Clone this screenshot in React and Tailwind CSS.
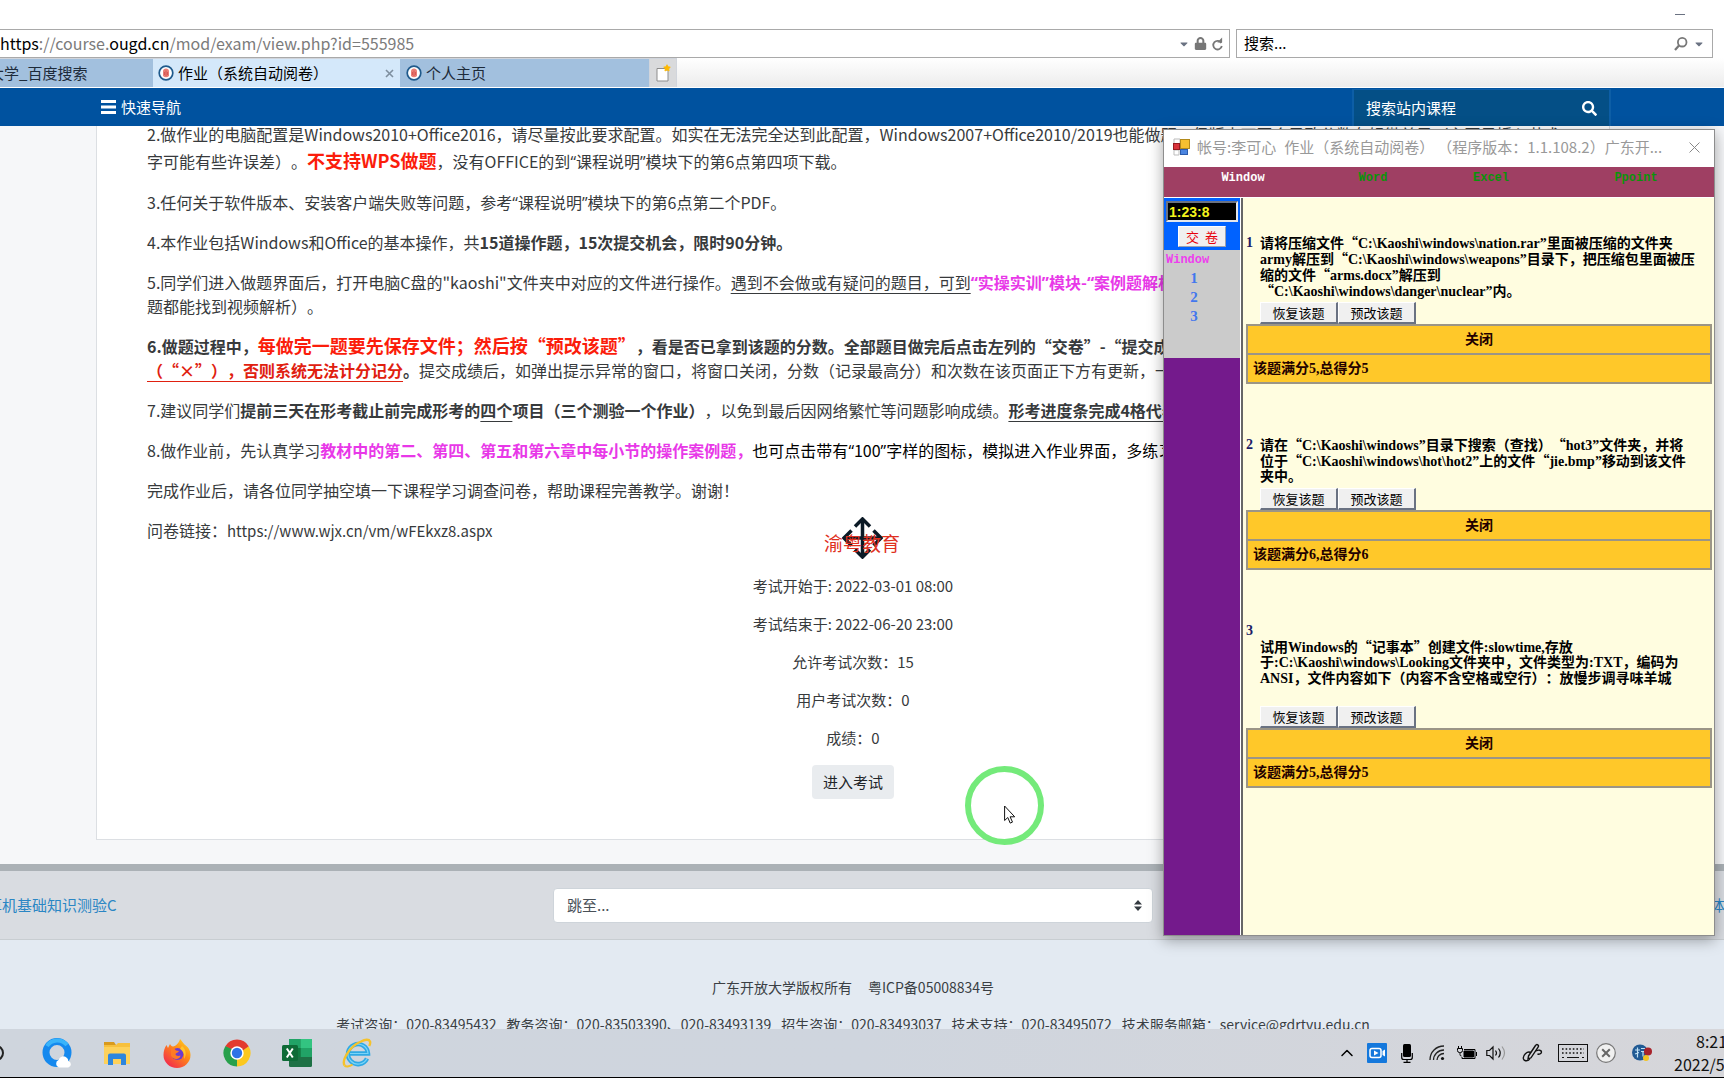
import React, { useState } from 'react';
import { ChevronUp, Star } from 'lucide-react';
import { FaLock, FaSearch, FaCaretDown } from 'react-icons/fa';

const questions = [
  {
    id: 1,
    lines: [
      '请将压缩文件“C:\\Kaoshi\\windows\\nation.rar”里面被压缩的文件夹',
      'army解压到“C:\\Kaoshi\\windows\\weapons”目录下，把压缩包里面被压',
      '缩的文件“arms.docx”解压到',
      '“C:\\Kaoshi\\windows\\danger\\nuclear”内。',
    ],
    result: '该题满分5,总得分5',
  },
  {
    id: 2,
    lines: [
      '请在“C:\\Kaoshi\\windows”目录下搜索（查找）“hot3”文件夹，并将',
      '位于“C:\\Kaoshi\\windows\\hot\\hot2”上的文件“jie.bmp”移动到该文件',
      '夹中。',
    ],
    result: '该题满分6,总得分6',
  },
  {
    id: 3,
    spaced: true,
    lines: [
      '试用Windows的“记事本”创建文件:slowtime,存放',
      '于:C:\\Kaoshi\\windows\\Looking文件夹中，文件类型为:TXT，编码为',
      'ANSI，文件内容如下（内容不含空格或空行）：放慢步调寻味羊城',
    ],
    result: '该题满分5,总得分5',
  },
];

const examInfo = [
  '考试开始于: 2022-03-01 08:00',
  '考试结束于: 2022-06-20 23:00',
  '允许考试次数：15',
  '用户考试次数：0',
  '成绩：0',
];

const contacts = [
  '考试咨询：020-83495432',
  '教务咨询：020-83503390、020-83493139',
  '招生咨询：020-83493037',
  '技术支持：020-83495072',
  '技术服务邮箱：service@gdrtvu.edu.cn',
];

// Curly quotes are full width in the CJK font, so they come from a Latin one here
const Quoted = ({ children }) => (
  <>
    <span className="font-['Open_Sans',sans-serif] leading-none">“</span>
    {children}
    <span className="font-['Open_Sans',sans-serif] leading-none">”</span>
  </>
);

// Opening quotes, and closing ones after a Chinese character, are full width
const WideQuotes = ({ text }) =>
  text.split(/(“|(?<=[\u4e00-\u9fff])”)/).map((part, idx) =>
    part === '“' || part === '”' ? (
      <span key={idx} className="font-['Noto_Sans_CJK_SC',sans-serif] leading-none">
        {part}
      </span>
    ) : (
      part
    )
  );

const SiteIcon = () => (
  <svg className="w-4 h-4 shrink-0" viewBox="0 0 16 16">
    <circle cx="8" cy="8" r="6.8" fill="#fff" stroke="#1f5a8c" strokeWidth="1.7" />
    <path d="M5 11V6.500C5 4.500 6.300 3.600 8 3.600s3 .9 3 2.900V11c-1.800 1.700-4.200 1.700-6 0z" fill="#ea7f76" />
    <path d="M6.500 10V7M8 11V5.500M9.500 10V7" stroke="#c93f3f" strokeWidth=".6" />
  </svg>
);

const BrowserChrome = () => (
  <header className="bg-white">
    <div className="h-[29px] flex justify-end items-center pr-[39px]">
      <button aria-label="最小化" className="w-[10px] h-4 flex items-center">
        <span className="w-full h-px bg-gray-500" />
      </button>
    </div>
    <div className="flex gap-[6px] pr-[11px] h-[29px]">
      <div className="flex-1 flex items-center gap-1 border border-l-0 border-[#a9a9a9] pr-[5px]">
        <div
          role="textbox"
          aria-label="地址"
          className="flex-1 pb-[2px] text-base leading-6 text-[#7b7b7b] whitespace-nowrap overflow-hidden"
        >
          <span className="text-black">https</span>://course.<span className="text-black">ougd.cn</span>
          /mod/exam/view.php?id=555985
        </div>
        <FaCaretDown className="w-3 h-3 text-gray-500" />
        <FaLock className="w-[13px] h-[13px] text-[#777]" />
        <button aria-label="刷新">
          <svg className="w-[13px] h-[14px]" viewBox="0 0 12 14">
            <path d="M9.800 6A4.300 4.300 0 1 0 10.300 9" fill="none" stroke="#777" strokeWidth="1.800" />
            <path d="M6 5.200 10.600.6v4.800H6z" fill="#777" />
          </svg>
        </button>
      </div>
      <div className="w-[477px] flex items-center gap-1 border border-[#a9a9a9] px-[7px]">
        <input
          aria-label="搜索"
          placeholder="搜索..."
          className="flex-1 min-w-0 pb-[2px] text-[15px] leading-6 outline-none placeholder:text-black"
        />
        <button aria-label="开始搜索" className="flex items-center gap-1">
          <svg className="w-4 h-4" viewBox="0 0 16 16" fill="none" stroke="#777">
            <circle cx="9.200" cy="6.200" r="4.300" strokeWidth="1.800" />
            <path d="M6 9.600 2 14" strokeWidth="2.200" />
          </svg>
          <FaCaretDown className="w-3 h-3 text-gray-500" />
        </button>
      </div>
    </div>
    <nav className="h-[30px] flex text-[15px] leading-6 bg-gradient-to-b from-white to-[#ececec] border-b border-white">
      <div className="w-[153px] flex items-center bg-[#a2c0de] border-t border-gray-300 text-[#1d2b3a] whitespace-nowrap">
        <span className="-ml-[11px]">大学_百度搜索</span>
      </div>
      <div className="w-[247px] flex items-center gap-1 pl-[5px] pr-[6px] bg-[#d4e8fa] border-t border-gray-300 text-black whitespace-nowrap">
        <SiteIcon />
        <span className="flex-1">作业（系统自动阅卷）</span>
        <button aria-label="关闭标签页">
          <svg className="w-[9px] h-[9px]" viewBox="0 0 9 9" stroke="#7e8f9f" strokeWidth="1.600">
            <path d="m1 1 7 7M8 1 1 8" />
          </svg>
        </button>
      </div>
      <div className="w-[249px] flex items-center gap-1 pl-[6px] bg-[#a2c0de] border-t border-gray-300 text-[#1d2b3a]">
        <SiteIcon />
        个人主页
      </div>
      <button aria-label="新建标签页" className="w-7 flex items-center justify-center bg-[#d9dadc] border border-b-0 border-gray-300">
        <span className="relative">
          <svg className="w-[15px] h-[17px]" viewBox="0 0 15 17">
            <path d="M1 3.500h8l3 3v9.500H1z" fill="#fff" stroke="#8d8d8d" />
          </svg>
          <Star className="absolute -top-px right-0 w-2 h-2 text-amber-400 fill-amber-400" />
        </span>
      </button>
    </nav>
  </header>
);

const SiteNav = () => (
  <div className="relative z-10 h-[38px] shrink-0 flex items-stretch justify-between bg-[#00529f] pl-[101px] pr-[113px] text-[15px] leading-6 text-white">
    <button className="flex items-center gap-[5px]">
      <svg className="w-[15px] h-[14px]" viewBox="0 0 15 14" fill="#fff">
        <path d="M0 0h15v3H0zM0 5.500h15v3H0zM0 11h15v3H0z" />
      </svg>
      快速导航
    </button>
    <div className="w-[259px] flex items-center mt-px px-3 bg-[#044f86] border-x-2 border-t border-[#0d5ea6]">
      <input
        aria-label="搜索站内课程"
        placeholder="搜索站内课程"
        className="flex-1 min-w-0 bg-transparent outline-none placeholder:text-white"
      />
      <button aria-label="搜索课程">
        <FaSearch className="w-[15px] h-[15px]" />
      </button>
    </div>
  </div>
);

const Instructions = () => (
  <div className="flex flex-col gap-4 whitespace-nowrap">
    <p>
      2.做作业的电脑配置是Windows2010+Office2016，请尽量按此要求配置。如实在无法完全达到此配置，Windows2007+Office2010/2019也能做题，但版本不同会导致分数有轻微差异（主要是插入艺术
      <br />
      字可能有些许误差）。
      <strong className="text-lg leading-7 text-[#fb1d0b]">不支持WPS做题</strong>
      ，没有OFFICE的到<Quoted>课程说明</Quoted>模块下的第6点第四项下载。
    </p>
    <p>
      3.任何关于软件版本、安装客户端失败等问题，参考<Quoted>课程说明</Quoted>模块下的第6点第二个PDF。
    </p>
    <p>
      4.本作业包括Windows和Office的基本操作，共<strong>15道操作题，15次提交机会，限时90分钟。</strong>
    </p>
    <p>
      5.同学们进入做题界面后，打开电脑C盘的"kaoshi"文件夹中对应的文件进行操作。
      <u className="underline-offset-4">遇到不会做或有疑问的题目，可到</u>
      <strong className="text-[#e838e8]">
        <Quoted>实操实训</Quoted>模块-<Quoted>案例题解析</Quoted>
      </strong>
      <br />
      题都能找到视频解析）。
    </p>
    <p>
      <strong>
        6.做题过程中，
        <span className="text-lg leading-none text-[#fb1d0b]">每做完一题要先保存文件；然后按“预改该题”</span>
        ，看是否已拿到该题的分数。全部题目做完后点击左列的“交卷”-“提交成
      </strong>
      <br />
      <strong className="text-[#e0200f] underline underline-offset-4">（“×”），否则系统无法计分记分</strong>
      <strong>。</strong>
      提交成绩后，如弹出提示异常的窗口，将窗口关闭，分数（记录最高分）和次数在该页面正下方有更新，一
    </p>
    <p>
      7.建议同学们
      <strong>
        提前三天在形考截止前完成形考的<u className="underline-offset-4">四个</u>项目（三个测验一个作业）
      </strong>
      ，以免到最后因网络繁忙等问题影响成绩。
      <strong className="underline underline-offset-4">形考进度条完成4格代表</strong>
    </p>
    <p>
      8.做作业前，先认真学习
      <strong className="text-[#e838e8]">教材中的第二、第四、第五和第六章中每小节的操作案例题，</strong>
      <span className="text-black">
        也可点击带有<Quoted>100</Quoted>字样的图标，模拟进入作业界面，多练习
      </span>
    </p>
    <p>完成作业后，请各位同学抽空填一下课程学习调查问卷，帮助课程完善教学。谢谢！</p>
    <p>
      问卷链接：<span className="text-[15px] leading-none">https://www.wjx.cn/vm/wFEkxz8.aspx</span>
    </p>
  </div>
);

const ClassicButton = ({ children }) => (
  <button className="w-[78px] h-[22px] bg-[#f0f0f0] text-[13px] leading-4 text-black border-t border-l border-r-2 border-b-2 border-t-white border-l-white border-r-gray-500 border-b-gray-500">
    {children}
  </button>
);

const Question = ({ question }) => {
  const [open, setOpen] = useState(true);
  return (
    <section className="font-bold text-sm leading-4 font-['Liberation_Serif','Noto_Sans_CJK_SC',serif]">
      <div className="flex pb-[3px]">
        <span className="w-[14px] text-[#1c1c66]">{question.id}</span>
        <p className={question.spaced ? 'py-4 whitespace-nowrap' : 'whitespace-nowrap'}>
          {question.lines.map((line) => (
            <span key={line} className="block h-4">
              <WideQuotes text={line} />
            </span>
          ))}
        </p>
      </div>
      <div className="flex pl-[14px] font-['Noto_Sans_CJK_SC',sans-serif] font-normal">
        <ClassicButton>恢复该题</ClassicButton>
        <ClassicButton>预改该题</ClassicButton>
      </div>
      <table className="w-full border-collapse bg-[#ffc829] text-[#200]">
        <tbody>
          <tr>
            <td className="h-[29px] border-2 border-[#9b9586] text-center">
              <button onClick={() => setOpen(!open)}>关闭</button>
            </td>
          </tr>
          {open && (
            <tr>
              <td className="h-[29px] border-2 border-[#9b9586] px-[5px]">{question.result}</td>
            </tr>
          )}
        </tbody>
      </table>
    </section>
  );
};

const ExamWindow = () => (
  <div className="absolute z-20 top-[129px] right-[9px] w-[552px] h-[807px] flex flex-col bg-white border border-[#8d8d8d] shadow-[0_4px_14px_rgba(0,0,0,0.35)]">
    <div className="h-[37px] shrink-0 flex items-center pb-[3px] pl-[9px] pr-[14px] text-[15px] leading-6 text-[#999] whitespace-nowrap">
      <svg className="w-[18px] h-[18px] mr-[6px]" viewBox="0 0 18 18">
        <path d="M1 1h6v5H1zM1 12h5v5H1z" fill="#fff" stroke="#bbb" />
        <rect x="7.500" y="1.500" width="9" height="9" fill="#f5c030" stroke="#b28a1c" />
        <rect x=".5" y="5.500" width="6" height="6" fill="#d8333b" stroke="#961a20" />
        <rect x="7.500" y="11.500" width="7" height="5" fill="#4b85e0" stroke="#2c5cac" />
      </svg>
      <span className="mr-2">帐号:李可心</span>
      <span className="mr-[3px]">作业（系统自动阅卷）</span>
      <span className="flex-1">（程序版本：1.1.108.2）广东开...</span>
      <button aria-label="关闭窗口">
        <svg className="w-[11px] h-[11px]" viewBox="0 0 11 11" stroke="#888">
          <path d="m.5.5 10 10M10.500.5l-10 10" />
        </svg>
      </button>
    </div>
    <nav className="h-[31px] shrink-0 grid grid-cols-[158px_102px_134px_1fr] justify-items-center items-start pt-[3px] bg-[#9f3f63] border-b border-white font-['Liberation_Mono',monospace] font-bold text-xs leading-4 text-[#0a930a]">
      <a href="#window" className="text-white">Window</a>
      <a href="#word">Word</a>
      <a href="#excel">Excel</a>
      <a href="#ppoint">Ppoint</a>
    </nav>
    <div className="flex-1 min-h-0 flex">
      <aside className="w-[76px] shrink-0 flex flex-col bg-[#741a8c]">
        <div className="h-[52px] flex flex-col items-center gap-1 pt-[3px] bg-[#0062ff]">
          <input
            aria-label="剩余时间"
            readOnly
            value="1:23:8"
            className="w-[72px] h-[21px] px-px bg-black border-2 border-t-gray-500 border-l-gray-500 border-r-gray-200 border-b-gray-200 font-['Liberation_Sans',sans-serif] font-bold text-sm leading-4 text-[#f4f41c] outline-none"
          />
          <button className="w-12 h-[21px] flex items-center justify-center gap-[6px] bg-[#f0f0f0] border border-b-gray-400 border-r-gray-400 border-white text-[13px] leading-4 text-red-600">
            <span>交</span>
            <span>卷</span>
          </button>
        </div>
        <div className="h-[108px] flex flex-col bg-[#cbcbcb] pt-[2px]">
          <span className="pl-[2px] font-['Liberation_Mono',monospace] font-bold text-xs leading-4 text-[#ee3eee]">Window</span>
          <div className="flex flex-col items-center pt-px pr-4 font-['Liberation_Serif',serif] font-bold text-[15px] leading-[19px] text-[#4377ee]">
            <a href="#q1">1</a>
            <a href="#q2">2</a>
            <a href="#q3">3</a>
          </div>
        </div>
      </aside>
      <div className="flex-1 min-w-0 flex flex-col gap-[53px] ml-px pt-[37px] pl-[3px] pr-[2px] border-l-2 border-[#666] bg-[#fffde0] text-black">
        {questions.map((q) => (
          <Question key={q.id} question={q} />
        ))}
      </div>
    </div>
  </div>
);

const CoursePage = () => (
  <main className="flex-1 min-h-0 overflow-hidden bg-[#f6f7f9] text-base leading-6 text-[#373a3c]">
    <div className="ml-24 mr-[114px] -mt-1 px-[50px] pb-10 bg-white border border-t-0 border-[#dcdfe3]">
      <Instructions />
      <div className="flex flex-col items-center gap-4 pt-[33px] text-[15px] leading-[22px]">
        {examInfo.map((line) => (
          <p key={line}>{line}</p>
        ))}
        <button className="h-[34px] px-[11px] rounded-sm bg-[#e9ecef] text-[#212529]">进入考试</button>
      </div>
    </div>
    <div className="mt-6 h-[76px] grid grid-cols-[1fr_600px_1fr] items-center border-t-[7px] border-t-[#abb1b6] border-b border-b-[#c8cdd1] bg-[#d9dce1] pr-[18px] text-[15px]">
      <a href="#prev" className="-ml-7 text-[#2a86c4]">计算机基础知识测验C</a>
      <div className="relative">
        <select
          aria-label="跳至"
          className="w-full h-[35px] pl-[13px] appearance-none rounded-sm border border-[#ced4da] bg-white text-[#495057]"
        >
          <option>跳至...</option>
        </select>
        <svg className="absolute right-[11px] top-[12px] w-2 h-[11px] pointer-events-none" viewBox="0 0 8 11" fill="#343a40">
          <path d="M0 4.500 4 0l4 4.500zM0 6.500 4 11l4-4.500z" />
        </svg>
      </div>
      <a href="#next" className="justify-self-end -mr-[19px] text-[#2a86c4]">体</a>
    </div>
    <footer className="h-[120px] flex flex-col items-center gap-[15px] bg-[#e3eaf2] pt-9 text-sm leading-[22px] text-[#3a3f44] pr-[18px]">
      <p className="flex gap-4">
        <span>广东开放大学版权所有</span>
        <span>粤ICP备05008834号</span>
      </p>
      <p className="flex gap-[10px] whitespace-nowrap">
        {contacts.map((c) => (
          <span key={c}>{c}</span>
        ))}
      </p>
    </footer>
  </main>
);

const AppIcons = () => (
  <div className="flex items-center gap-[30px]">
    <button aria-label="QQ浏览器">
      <svg className="w-[30px] h-[30px]" viewBox="0 0 30 30">
        <circle cx="15" cy="14.500" r="11" fill="none" stroke="#1589ee" strokeWidth="7" />
        <path d="M5 8A12.500 12.500 0 0 1 25 7" fill="none" stroke="#39b4fa" strokeWidth="4" />
        <path d="M17 29.500a4 4 0 0 1-.5-7.500 5 5 0 0 1 8.500-2c1 1 1.300 2 1.300 2.900a3.400 3.400 0 0 1 0 6.600z" fill="#fff" />
      </svg>
    </button>
    <button aria-label="文件资源管理器">
      <svg className="w-[30px] h-[30px]" viewBox="0 0 30 30">
        <path d="M2 4h10l2 3H2z" fill="#d99a1c" />
        <path d="M2 7h26v19H2z" fill="#fdd15a" />
        <path d="M2 7h12l2-2h12v4H2z" fill="#f7c03c" />
        <path d="M6 27V17.500a2 2 0 0 1 2-2h14a2 2 0 0 1 2 2V27h-5v-6h-8v6z" fill="#2e86dd" />
      </svg>
    </button>
    <button aria-label="Firefox">
      <svg className="w-[30px] h-[30px]" viewBox="0 0 30 30">
        <defs>
          <linearGradient id="fox" x1="1" y1="0" x2="0.200" y2="1">
            <stop offset="0" stopColor="#ffe226" />
            <stop offset=".45" stopColor="#ff8a16" />
            <stop offset="1" stopColor="#f2264f" />
          </linearGradient>
        </defs>
        <path d="M18 1c2 2 3 4 4.500 5.500C26 9 28.500 12 28.500 17a13.500 13 0 0 1-27 0c0-4 1-7 3-10l1.500 3 2-4c.8 1.500 1.500 2.300 3 2.500C14 8 17 5 18 1z" fill="url(#fox)" />
        <circle cx="15.500" cy="16" r="6" fill="#6d3bd0" />
        <path d="M9 11c2-1 4 0 5 1.500l3 .5c-.5 2-3 1.500-3.500 3 0 2 3 2.500 5 1.500 0 4-7.500 5-9.500 0z" fill="#ff7a24" />
        <path d="M20 8c4 3 5 9 2 13 1-5-1-8-4-10z" fill="#ffc52e" />
      </svg>
    </button>
    <button aria-label="Chrome">
      <svg className="w-[30px] h-[30px]" viewBox="0 0 30 30">
        <path d="M15 15 3.300 8.250A13.500 13.500 0 0 1 26.700 8.250z" fill="#e33b2e" />
        <path d="M15 15V28.500A13.500 13.500 0 0 1 3.300 8.250z" fill="#27a04b" />
        <path d="M15 15 26.700 8.250A13.500 13.500 0 0 1 15 28.500z" fill="#fcc81f" />
        <path d="M3.300 8.250 9.300 18.500 12 12z" fill="#27a04b" />
        <path d="M15 8.300h11.700L20 13z" fill="#e33b2e" />
        <path d="M15 28.500 20.900 18.300 15 20z" fill="#fcc81f" />
        <circle cx="15" cy="15" r="6.700" fill="#fff" />
        <circle cx="15" cy="15" r="5.200" fill="#2d73e6" />
      </svg>
    </button>
    <button aria-label="Excel">
      <svg className="w-[30px] h-[30px]" viewBox="0 0 30 30">
        <rect x="7" y="1" width="23" height="28" rx="1.500" fill="#1e7145" />
        <path d="M7 1h11.500v9H7z" fill="#21a366" />
        <path d="M18.500 1H30v9H18.500z" fill="#33c481" />
        <path d="M18.500 10H30v9H18.500z" fill="#21a366" />
        <path d="M7 10h11.500v9H7z" fill="#107c41" />
        <rect x="0" y="7" width="16" height="16" rx="1.500" fill="#0e6b37" />
        <path d="m4.800 10.500 6 9M10.800 10.500l-6 9" stroke="#fff" strokeWidth="2" />
      </svg>
    </button>
    <button aria-label="Internet Explorer">
      <svg className="w-[30px] h-[30px]" viewBox="0 0 30 30" fill="none">
        <path d="M25 20.500a10 10 0 1 1 1-5H8" stroke="#2fa9e4" strokeWidth="4.500" />
        <path d="M25 20.500a10 10 0 1 1 1-5H8" stroke="#7ad4f7" strokeWidth="1.200" />
        <path d="M2.500 27.500C-.5 22 8 8 19 3.500c4-2 8-2.500 9 0 .5 1.500 0 3-.8 4.500" stroke="#f5c22c" strokeWidth="2.400" />
        <path d="M2.500 27.500c2 2 6 .5 8-1" stroke="#f5c22c" strokeWidth="2" />
      </svg>
    </button>
  </div>
);

const Tray = () => (
  <div className="flex items-center text-black">
    <ChevronUp className="w-5 h-5 mr-[10px]" strokeWidth={1.8} />
    <svg className="w-5 h-5 mr-[14px]" viewBox="0 0 20 20">
      <rect width="20" height="20" rx="1" fill="#1478dc" />
      <rect x="3" y="5.500" width="11" height="9" rx="2" fill="none" stroke="#fff" strokeWidth="1.500" />
      <path d="m7 7.500 4.500 2.500L7 12.500zM15.500 8 18 6.500v7L15.500 12z" fill="#fff" />
    </svg>
    <svg className="w-3 h-[19px] mr-4" viewBox="0 0 12 19">
      <rect x="2" width="8" height="13" rx="1.500" />
      <path d="M.7 9v4.500a2 2 0 0 0 2 2h6.600a2 2 0 0 0 2-2V9M6 15.500V18M2.500 18.300h7" fill="none" stroke="#000" strokeWidth="1.200" />
    </svg>
    <svg className="w-4 h-4 mr-3" viewBox="0 0 16 16" fill="none" stroke="#222" strokeWidth="1.300">
      <path d="M1 15C1 7 7 1 15 1M4.500 15c0-5.500 4.500-10 10.500-10M8 15c0-3.500 3-6.500 7-6.500" />
      <circle cx="13.500" cy="13.500" r="1.600" fill="#111" stroke="none" />
    </svg>
    <svg className="w-5 h-[14px] mr-[9px]" viewBox="0 0 20 14" fill="none" stroke="#000">
      <path d="M1.500 0v2.500M4.500 0v2.500M.5 2.500h5v2a2 2 0 0 1-2 2h-1a2 2 0 0 1-2-2zM3 6.500v2q0 1.500 1.500 1.500" />
      <path d="M7 3.500h11v9H5V11" />
      <path d="M7 5h9.500v6H7z" fill="#000" />
      <path d="M19.500 6v4" />
    </svg>
    <svg className="w-[21px] h-4 mr-[15px]" viewBox="0 0 21 16" fill="none" stroke="#111" strokeWidth="1.200">
      <path d="M.8 5.500h2.700L7 2v12l-3.500-3.500H.8zM9.500 5.500q2 2.500 0 5M12.500 3.500q3.500 4.500 0 9" />
      <path d="M16 1.500q5 6.500 0 13" stroke="#999" />
    </svg>
    <svg className="w-[21px] h-5 mr-[15px]" viewBox="0 0 21 20" fill="none" stroke="#111" strokeWidth="1.400">
      <path d="m6.500 13 7-10.500q1-1.500 2.300-.6t.3 2.300L9 14.800 6 16z" />
      <path d="M9 9.500c-4-2-8.500 3-7.500 6.500.8 2.500 5 2.500 6.500-.5M14 8c2.500-1.500 5.500-1 5.500 1 0 2-2.500 2.500-4 2" />
    </svg>
    <svg className="w-[30px] h-[18px] mr-2" viewBox="0 0 30 18" fill="none" stroke="#111">
      <rect x=".5" y=".5" width="29" height="17" />
      <path d="M4 5h22M4 9h22" strokeWidth="1.600" strokeDasharray="1.600 2" />
      <path d="M4 13.500h2M9 13.500h12M24 13.500h2" />
    </svg>
    <svg className="w-5 h-5 mr-4" viewBox="0 0 20 20" fill="none">
      <circle cx="10" cy="10" r="9.300" fill="#f0f0f0" stroke="#777" strokeWidth="1.200" />
      <path d="m6.200 6.200 7.600 7.600M13.800 6.200l-7.600 7.600" stroke="#666" strokeWidth="2" />
    </svg>
    <svg className="w-5 h-[18px] mr-[22px]" viewBox="0 0 20 18">
      <circle cx="8" cy="8.500" r="8" fill="#205a94" />
      <path d="M3 6h5M5.500 3.500v10M9 4.500h4M9 7.500h5M11 7.500v5M3 10l4-1.500" stroke="#bfe0f4" strokeWidth="1.200" fill="none" />
      <circle cx="16" cy="7.500" r="4" fill="#a8232b" />
      <circle cx="14" cy="14" r="3" fill="#f2c320" />
    </svg>
    <div className="w-[50px] overflow-hidden text-base leading-[23px] text-[#111] whitespace-nowrap">
      <div className="pl-[22px]">8:21</div>
      <div>2022/5</div>
    </div>
  </div>
);

const App = () => (
  <div className="relative h-screen overflow-hidden flex flex-col font-['Noto_Sans_CJK_SC',sans-serif] [text-spacing-trim:space-all]">
    <BrowserChrome />
    <SiteNav />
    <CoursePage />
    <ExamWindow />

    {/* Drag cursor with the watermark over it */}
    <svg className="absolute z-10 left-[842px] top-[517px] w-[41px] h-[42px]" viewBox="0 0 41 42" fill="none" stroke="#0b1a26" strokeWidth="3.500">
      <path d="M20.500 2v38M2 21h37" />
      <path d="M13 9.500 20.500 2l7.500 7.500M13 32.500l7.500 7.500 7.500-7.500M9.500 13.500 2 21l7.500 7.500M31.500 13.500 39 21l-7.500 7.500" />
    </svg>
    <span className="absolute z-10 left-[824px] top-[531px] text-[19px] leading-6 text-[#e0301e]">渝粤教育</span>

    {/* Click highlight and pointer */}
    <div className="absolute z-10 left-[965px] top-[766px] w-[79px] h-[79px] rounded-full border-[6px] border-[#74ea7a]" />
    <svg className="absolute z-10 left-[1004px] top-[805px] w-3 h-[19px]" viewBox="0 0 12 19">
      <path d="M.6 1v14.500l3.200-3 2.400 5.600 2.300-1-2.400-5.300h4.600z" fill="#fff" stroke="#111" />
    </svg>

    <div className="relative z-30 h-[49px] shrink-0 flex items-center justify-between bg-gradient-to-r from-[#cfd5dd] via-[#cfd5de] to-[#d6d6da] border-b border-black">
      <div className="flex items-center">
        <button aria-label="搜索" className="-ml-3 mr-[38px] w-4 h-4 rounded-full border-2 border-[#222]" />
        <AppIcons />
      </div>
      <Tray />
    </div>
  </div>
);

export default App;
